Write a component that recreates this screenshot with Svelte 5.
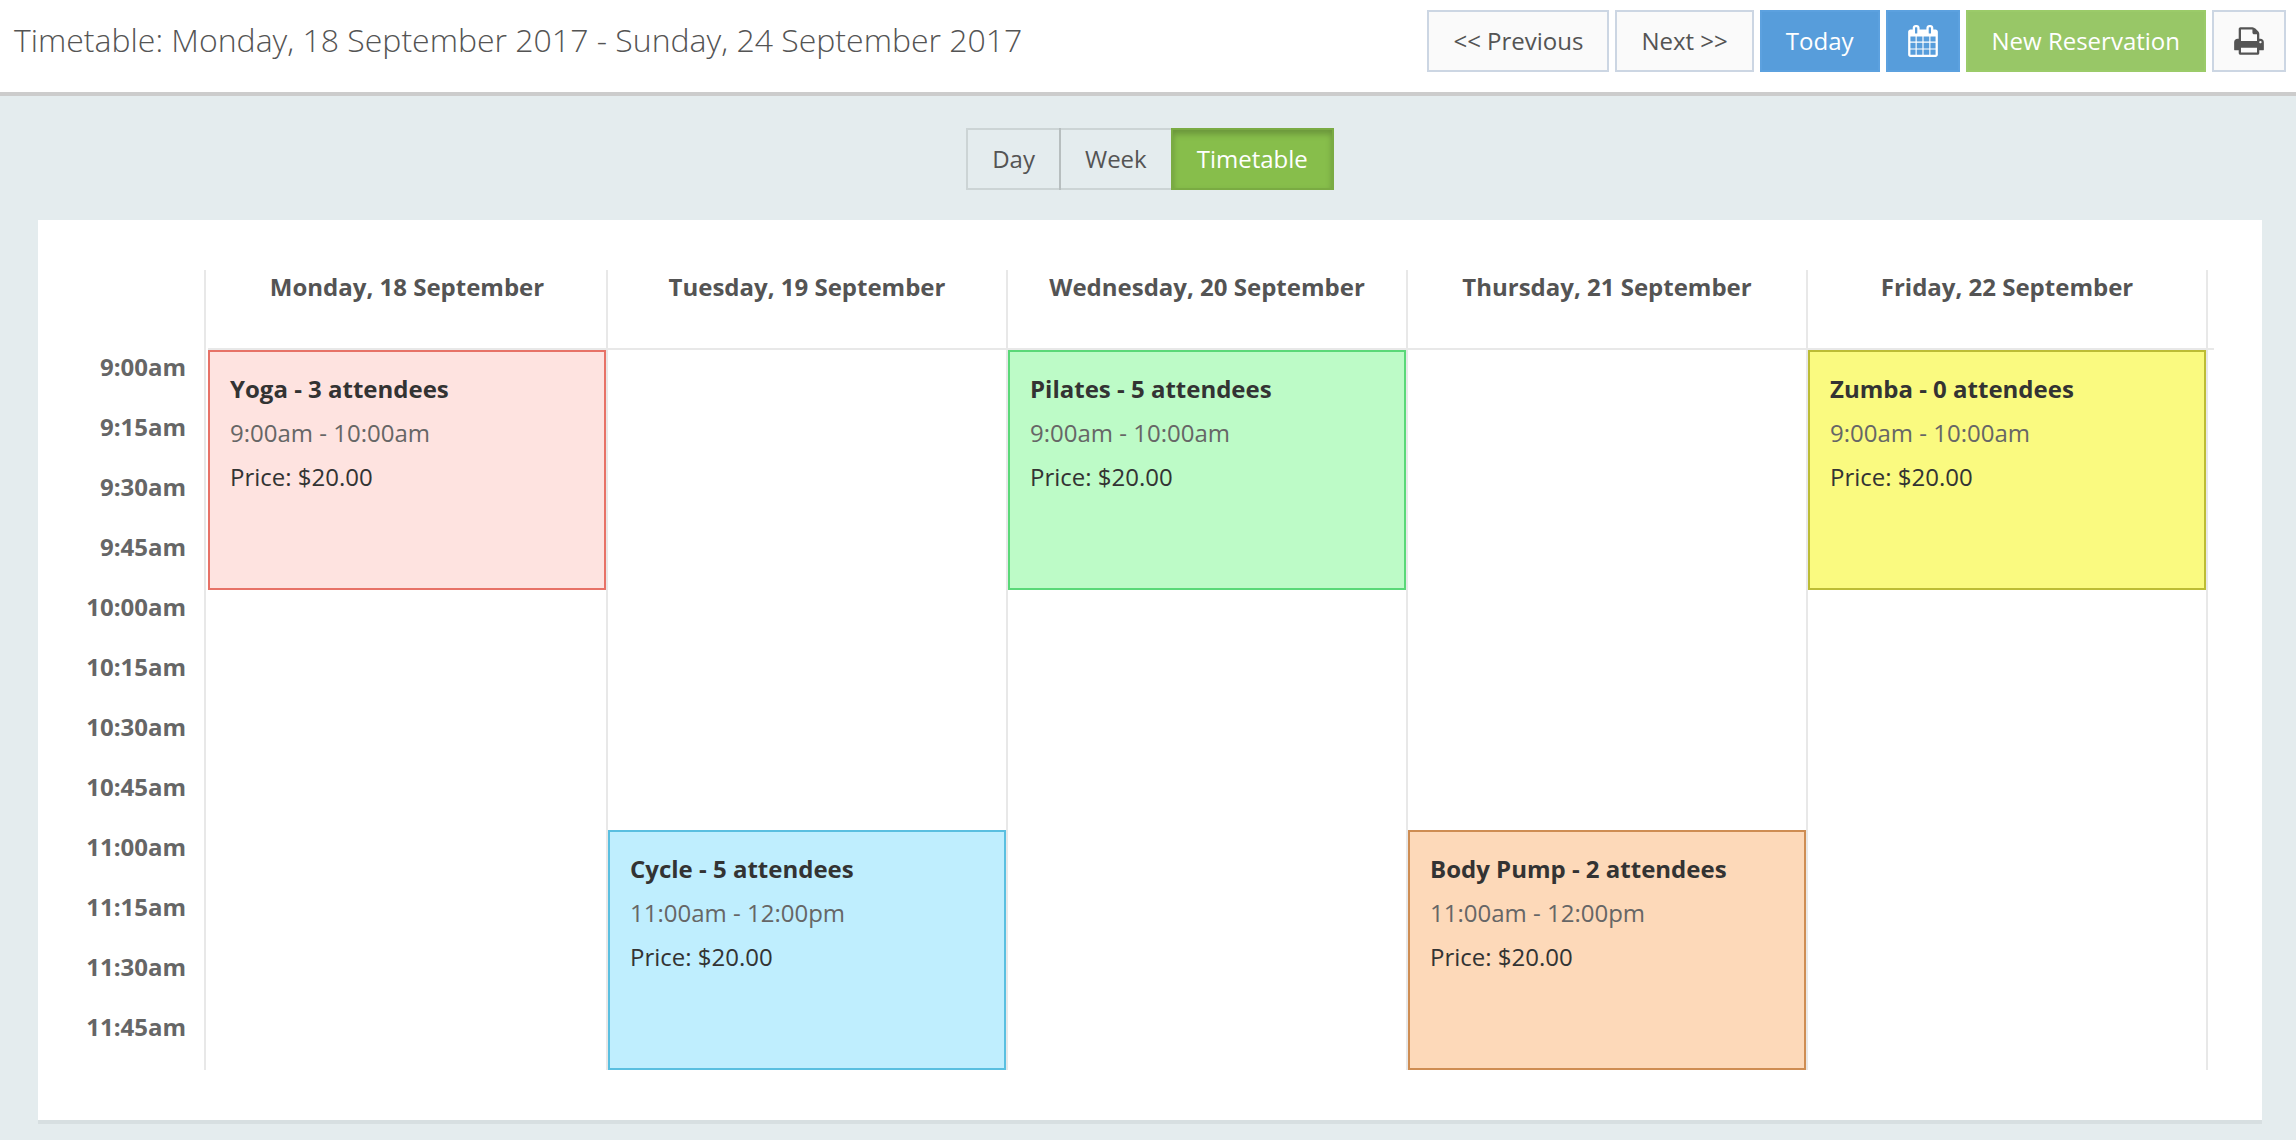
<script>
  const views = ["Day", "Week", "Timetable"];
  let activeView = "Timetable";

  const days = [
    "Monday, 18 September",
    "Tuesday, 19 September",
    "Wednesday, 20 September",
    "Thursday, 21 September",
    "Friday, 22 September",
  ];

  const times = [
    "9:00am",
    "9:15am",
    "9:30am",
    "9:45am",
    "10:00am",
    "10:15am",
    "10:30am",
    "10:45am",
    "11:00am",
    "11:15am",
    "11:30am",
    "11:45am",
  ];

  // start and span are counted in 15 minute slots
  const classes = [
    { day: 0, start: 0, span: 4, name: "Yoga", attendees: 3, time: "9:00am - 10:00am", price: "$20.00", color: "red" },
    { day: 1, start: 8, span: 4, name: "Cycle", attendees: 5, time: "11:00am - 12:00pm", price: "$20.00", color: "blue" },
    { day: 2, start: 0, span: 4, name: "Pilates", attendees: 5, time: "9:00am - 10:00am", price: "$20.00", color: "green" },
    { day: 3, start: 8, span: 4, name: "Body Pump", attendees: 2, time: "11:00am - 12:00pm", price: "$20.00", color: "orange" },
    { day: 4, start: 0, span: 4, name: "Zumba", attendees: 0, time: "9:00am - 10:00am", price: "$20.00", color: "yellow" },
  ];

  // cells for one row, skipping those covered by a class above
  function cellsFor(slot) {
    const cells = [];
    for (let day = 0; day < days.length; day++) {
      const item = classes.find(
        (c) => c.day === day && slot >= c.start && slot < c.start + c.span
      );
      if (item && item.start !== slot) continue;
      cells.push({ day, item });
    }
    return cells;
  }
</script>

<header>
  <h1>Timetable: Monday, 18 September 2017 - Sunday, 24 September 2017</h1>
  <div class="actions">
    <button class="btn">&lt;&lt; Previous</button>
    <button class="btn">Next &gt;&gt;</button>
    <button class="btn primary">Today</button>
    <button class="btn primary icon" aria-label="Pick a date">
      <svg viewBox="0 0 1792 1792">
        <path
          d="M192 1664h288v-288h-288v288zm352 0h320v-288h-320v288zm-352-352h288v-320h-288v320zm352 0h320v-320h-320v320zm-352-384h288v-288h-288v288zm736 736h320v-288h-320v288zm-384-736h320v-288h-320v288zm768 736h288v-288h-288v288zm-384-352h320v-320h-320v320zm-352-864v-288q0-13-9.5-22.5t-22.5-9.5h-64q-13 0-22.5 9.5t-9.5 22.5v288q0 13 9.5 22.5t22.5 9.5h64q13 0 22.5-9.5t9.5-22.5zm736 864h288v-320h-288v320zm-384-384h320v-288h-320v288zm384 0h288v-288h-288v288zm32-480v-288q0-13-9.5-22.5t-22.5-9.5h-64q-13 0-22.5 9.5t-9.5 22.5v288q0 13 9.5 22.5t22.5 9.5h64q13 0 22.5-9.5t9.5-22.5zm384-64v1280q0 52-38 90t-90 38h-1408q-52 0-90-38t-38-90v-1280q0-52 38-90t90-38h128v-96q0-66 47-113t113-47h64q66 0 113 47t47 113v96h384v-96q0-66 47-113t113-47h64q66 0 113 47t47 113v96h128q52 0 90 38t38 90z"
        />
      </svg>
    </button>
    <button class="btn success">New Reservation</button>
    <button class="btn icon" aria-label="Print">
      <svg viewBox="0 0 1792 1792">
        <path
          d="M448 1536h896v-256h-896v256zm0-640h896v-384h-160q-40 0-68-28t-28-68v-160h-640v640zm1152 64q0-26-19-45t-45-19-45 19-19 45 19 45 45 19 45-19 19-45zm128 0v416q0 13-9.5 22.5t-22.5 9.5h-224v160q0 40-28 68t-68 28h-960q-40 0-68-28t-28-68v-160h-224q-13 0-22.5-9.5t-9.5-22.5v-416q0-79 56.5-135.5t135.5-56.5h64v-544q0-40 28-68t68-28h672q40 0 88 20t76 48l152 152q28 28 48 76t20 88v256h64q79 0 135.5 56.5t56.5 135.5z"
        />
      </svg>
    </button>
  </div>
</header>

<main>
  <div class="views">
    {#each views as view}
      <button
        class="view"
        class:active={view === activeView}
        on:click={() => (activeView = view)}
      >
        {view}
      </button>
    {/each}
  </div>

  <section class="card">
    <table>
      <colgroup>
        <col class="time-col" />
        {#each days as day}
          <col />
        {/each}
        <col class="end-col" />
      </colgroup>
      <thead>
        <tr>
          <td class="time"></td>
          {#each days as day}
            <th class="day" scope="col">{day}</th>
          {/each}
          <td class="end"></td>
        </tr>
      </thead>
      <tbody>
        {#each times as time, slot}
          <tr>
            <th class="time" scope="row">{time}</th>
            {#each cellsFor(slot) as { item }}
              {#if item}
                <td class="slot" rowspan={item.span}>
                  <div class="class {item.color}">
                    <strong>{item.name} - {item.attendees} attendees</strong>
                    <span class="hours">{item.time}</span>
                    <span>Price: {item.price}</span>
                  </div>
                </td>
              {:else}
                <td class="slot"></td>
              {/if}
            {/each}
          </tr>
        {/each}
      </tbody>
    </table>
  </section>
</main>

<style>
  :global(body) {
    background: #e4ecee;
    color: #545454;
    font-family: "Open Sans", "Noto Sans", sans-serif;
    font-size: 24px;
    line-height: 34px;
  }

  header {
    display: flex;
    align-items: flex-start;
    justify-content: space-between;
    padding: 10px 10px 20px 14px;
    background: #fff;
    border-bottom: 4px solid #ccc;
  }

  h1 {
    margin: 0;
    font-size: 32px;
    font-weight: 300;
    line-height: 60px;
  }

  .actions {
    display: flex;
    gap: 6px;
  }

  button {
    box-sizing: border-box;
    height: 62px;
    padding: 0 24px;
    border: 2px solid #ccd6e3;
    color: inherit;
    font: inherit;
    white-space: nowrap;
    cursor: pointer;
  }

  .btn {
    background: #fafafa;
  }

  .primary {
    background: #579ddb;
    border-color: #5ca1df;
    color: #fff;
  }

  .success {
    background: #98c767;
    border-color: #9bcb69;
    color: #fff;
  }

  .icon {
    display: flex;
    align-items: center;
    padding: 0 19px;
  }

  .icon svg {
    width: 32px;
    height: 32px;
    fill: currentColor;
  }

  main {
    padding: 32px 34px 16px 38px;
  }

  .views {
    display: flex;
    justify-content: center;
    margin-bottom: 30px;
  }

  .view {
    background: transparent;
    border-color: rgba(0, 0, 0, 0.1);
  }

  .view + .view {
    margin-left: -2px;
  }

  .view.active {
    position: relative;
    background: #87be4b;
    border-color: #7aab43;
    color: #fff;
    box-shadow: inset 0 4px 6px rgba(0, 0, 0, 0.22);
  }

  .card {
    padding: 50px 48px;
    background: #fff;
    box-shadow: 0 4px 0 #d7dfe1;
  }

  table {
    width: 100%;
    table-layout: fixed;
    border-collapse: separate;
    border-spacing: 0;
  }

  .time-col {
    width: 122px;
  }

  .end-col {
    width: 6px;
  }

  th,
  td {
    box-sizing: border-box;
    padding: 0;
    vertical-align: top;
  }

  .time {
    height: 60px;
    padding-right: 20px;
    border-right: 2px solid #fff;
    box-shadow: inset -2px 0 #e8e8e8;
    color: #666;
    text-align: right;
    white-space: nowrap;
  }

  .day {
    height: 80px;
    border-right: 2px solid #e8e8e8;
    border-bottom: 2px solid #e8e8e8;
  }

  .end {
    border-bottom: 2px solid #e8e8e8;
  }

  .slot {
    border-right: 2px solid #e8e8e8;
  }

  .class {
    display: flex;
    flex-direction: column;
    box-sizing: border-box;
    height: 240px;
    padding: 15px 20px;
    border: 2px solid;
    line-height: 44px;
  }

  .class strong,
  .class span {
    color: #333;
  }

  .class .hours {
    color: #666;
  }

  .red {
    background: #fee3e0;
    border-color: #e77267;
  }

  .blue {
    background: #bfeefe;
    border-color: #5abfe0;
  }

  .green {
    background: #bdfbc7;
    border-color: #5ad878;
  }

  .orange {
    background: #fdd9b9;
    border-color: #ce8d53;
  }

  .yellow {
    background: #fafa80;
    border-color: #bcbc35;
  }
</style>
